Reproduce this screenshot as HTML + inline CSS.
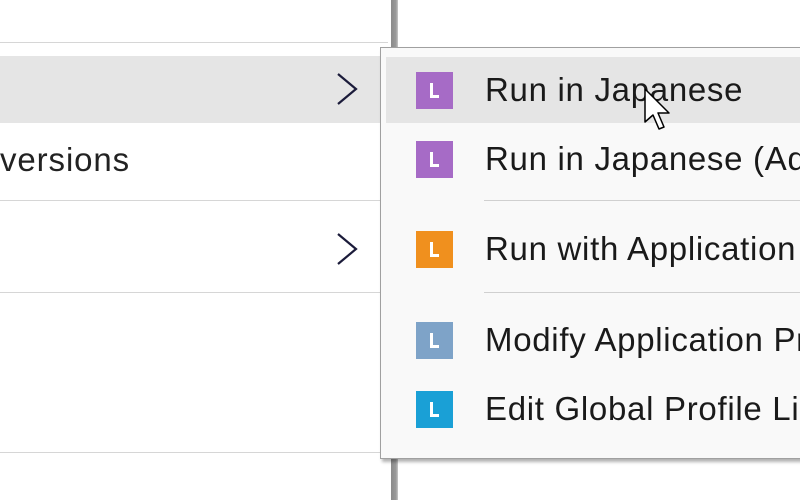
<!DOCTYPE html>
<html><head><style>
body{margin:0;width:800px;height:500px;overflow:hidden;background:#fff;position:relative;font-family:"Liberation Sans",sans-serif;color:#1a1a1a}
.a{position:absolute}
.hl{left:0;width:388px;height:1px;background:#d6d6d6}
.ic{position:absolute;left:416px;width:37px;height:37px}
.ic span{position:absolute;left:14px;top:11px;width:3px;height:15px;background:#fff}
.ic span:after{content:"";position:absolute;left:0;bottom:0;width:9px;height:3px;background:#fff}
.t{position:absolute;left:485px;font-size:33px;letter-spacing:0.7px;white-space:nowrap;line-height:36px}
.sep{position:absolute;left:484px;right:0;height:1px;background:#d0d0d0}
#m{position:absolute;left:0;top:0;width:800px;height:500px;overflow:hidden}
</style></head><body>
<div class="a hl" style="top:42px"></div>
<div class="a" style="left:0;top:56px;width:388px;height:67px;background:#e5e5e5"></div>
<div class="a hl" style="top:200px"></div>
<div class="a hl" style="top:292px"></div>
<div class="a hl" style="top:452px"></div>
<div class="a" style="left:0;top:142px;font-size:33px;letter-spacing:0.9px;line-height:36px;color:#222">versions</div>
<svg class="a" style="left:334px;top:70px" width="30" height="40"><path d="M4 4 L22 19 L4 34" fill="none" stroke="#1b1b3a" stroke-width="2.2"/></svg>
<svg class="a" style="left:334px;top:230px" width="30" height="40"><path d="M4 4 L22 19 L4 34" fill="none" stroke="#1b1b3a" stroke-width="2.2"/></svg>
<div class="a" style="left:391px;top:0;width:7px;height:500px;background:linear-gradient(90deg,#8a8a8a,#9a9a9a 70%,#c8c8c8)"></div>
<div id="m">
<div class="a" style="left:380px;top:47px;width:430px;height:410px;background:#f9f9f9;border:1px solid #a0a0a0;box-shadow:2px 3px 3px rgba(0,0,0,0.3)"></div>
<div class="a" style="left:386px;top:57px;width:414px;height:66px;background:#e5e5e5"></div>
<div class="ic" style="top:72px;background:#a66bc6"><span></span></div>
<div class="t" style="top:72px">Run in Japanese</div>
<div class="ic" style="top:141px;background:#a66bc6"><span></span></div>
<div class="t" style="top:141px">Run in Japanese (Admin)</div>
<div class="sep" style="top:200px"></div>
<div class="ic" style="top:231px;background:#f0901e"><span></span></div>
<div class="t" style="top:231px">Run with Application Profile</div>
<div class="sep" style="top:292px"></div>
<div class="ic" style="top:322px;background:#7ea3c8"><span></span></div>
<div class="t" style="top:322px">Modify Application Profile</div>
<div class="ic" style="top:391px;background:#1aa0d6"><span></span></div>
<div class="t" style="top:391px">Edit Global Profile List</div>
<svg class="a" style="left:644px;top:88px" width="32" height="50"><path d="M1 1 L1 34 L9 27 L15 41 L20 39 L14 25 L25 25 Z" fill="#fff" stroke="#000" stroke-width="1.5" stroke-linejoin="round"/></svg>
</div>
</body></html>
